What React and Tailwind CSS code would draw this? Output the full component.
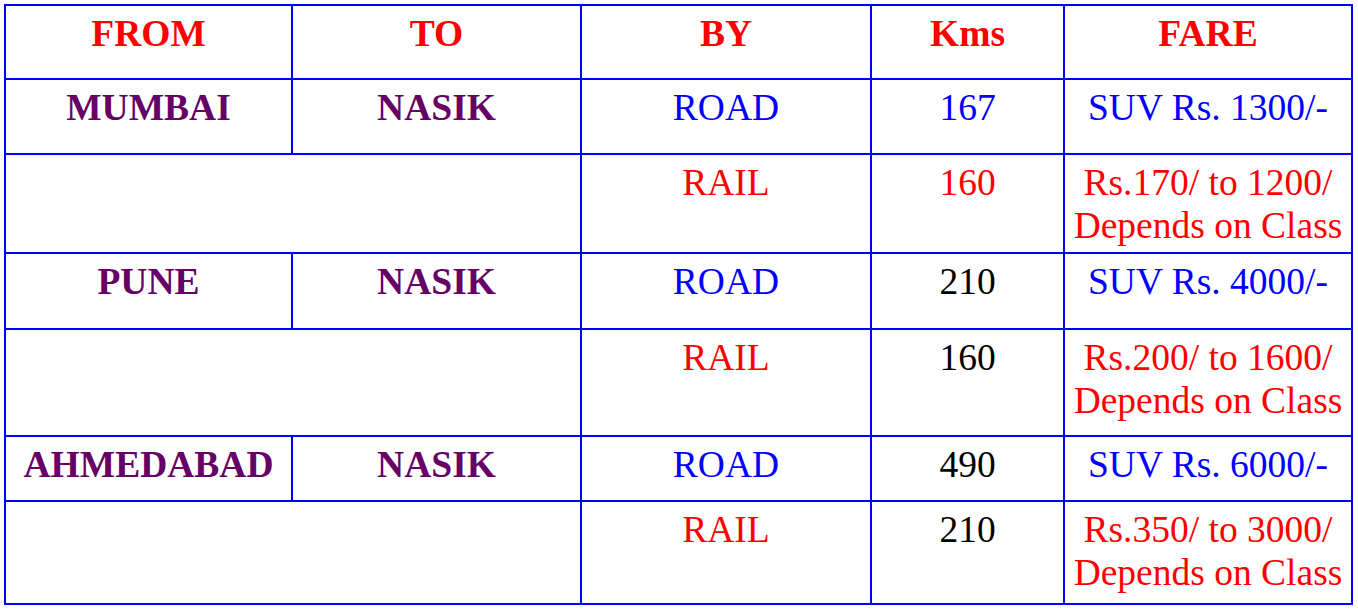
const rows = [
  { from: 'MUMBAI', to: 'NASIK', by: 'ROAD', km: '167', kmColor: 'text-[#0000ff]', fare: ['SUV Rs. 1300/-'], fareColor: 'text-[#0000ff]' },
  { by: 'RAIL', km: '160', kmColor: 'text-[#ff0000]', fare: ['Rs.170/ to 1200/', 'Depends on Class'], fareColor: 'text-[#ff0000]' },
  { from: 'PUNE', to: 'NASIK', by: 'ROAD', km: '210', kmColor: 'text-black', fare: ['SUV Rs. 4000/-'], fareColor: 'text-[#0000ff]' },
  { by: 'RAIL', km: '160', kmColor: 'text-black', fare: ['Rs.200/ to 1600/', 'Depends on Class'], fareColor: 'text-[#ff0000]' },
  { from: 'AHMEDABAD', to: 'NASIK', by: 'ROAD', km: '490', kmColor: 'text-black', fare: ['SUV Rs. 6000/-'], fareColor: 'text-[#0000ff]' },
  { by: 'RAIL', km: '210', kmColor: 'text-black', fare: ['Rs.350/ to 3000/', 'Depends on Class'], fareColor: 'text-[#ff0000]' },
];

function Cell({ className = '', children }) {
  return <div className={`bg-white text-center pt-[6px] ${className}`}>{children}</div>;
}

export default function App() {
  return (
    <div className="min-h-screen bg-white pt-[4px] pl-[4px] font-['Liberation_Serif','Times_New_Roman',serif] text-[37.5px] leading-[43px]">
      <div className="grid w-fit grid-cols-[285px_287px_288px_191px_286px] grid-rows-[72px_73px_97px_74px_105px_63px_101px] gap-[2px] bg-[#0000ff] p-[2px]">
        {/* Header */}
        {['FROM', 'TO', 'BY', 'Kms', 'FARE'].map((h) => (
          <Cell key={h} className="font-bold text-[#ff0000]">{h}</Cell>
        ))}

        {rows.map((r, i) => (
          <div key={i} className="contents">
            {r.from ? (
              <>
                <Cell className="font-bold text-[#660066]">{r.from}</Cell>
                <Cell className="font-bold text-[#660066]">{r.to}</Cell>
              </>
            ) : (
              <Cell className="col-span-2" />
            )}
            <Cell className={r.by === 'ROAD' ? 'text-[#0000ff]' : 'text-[#ff0000]'}>{r.by}</Cell>
            <Cell className={r.kmColor}>{r.km}</Cell>
            <Cell className={`${r.fareColor} whitespace-nowrap`}>
              {r.fare.map((line) => (
                <div key={line}>{line}</div>
              ))}
            </Cell>
          </div>
        ))}
      </div>
    </div>
  );
}
